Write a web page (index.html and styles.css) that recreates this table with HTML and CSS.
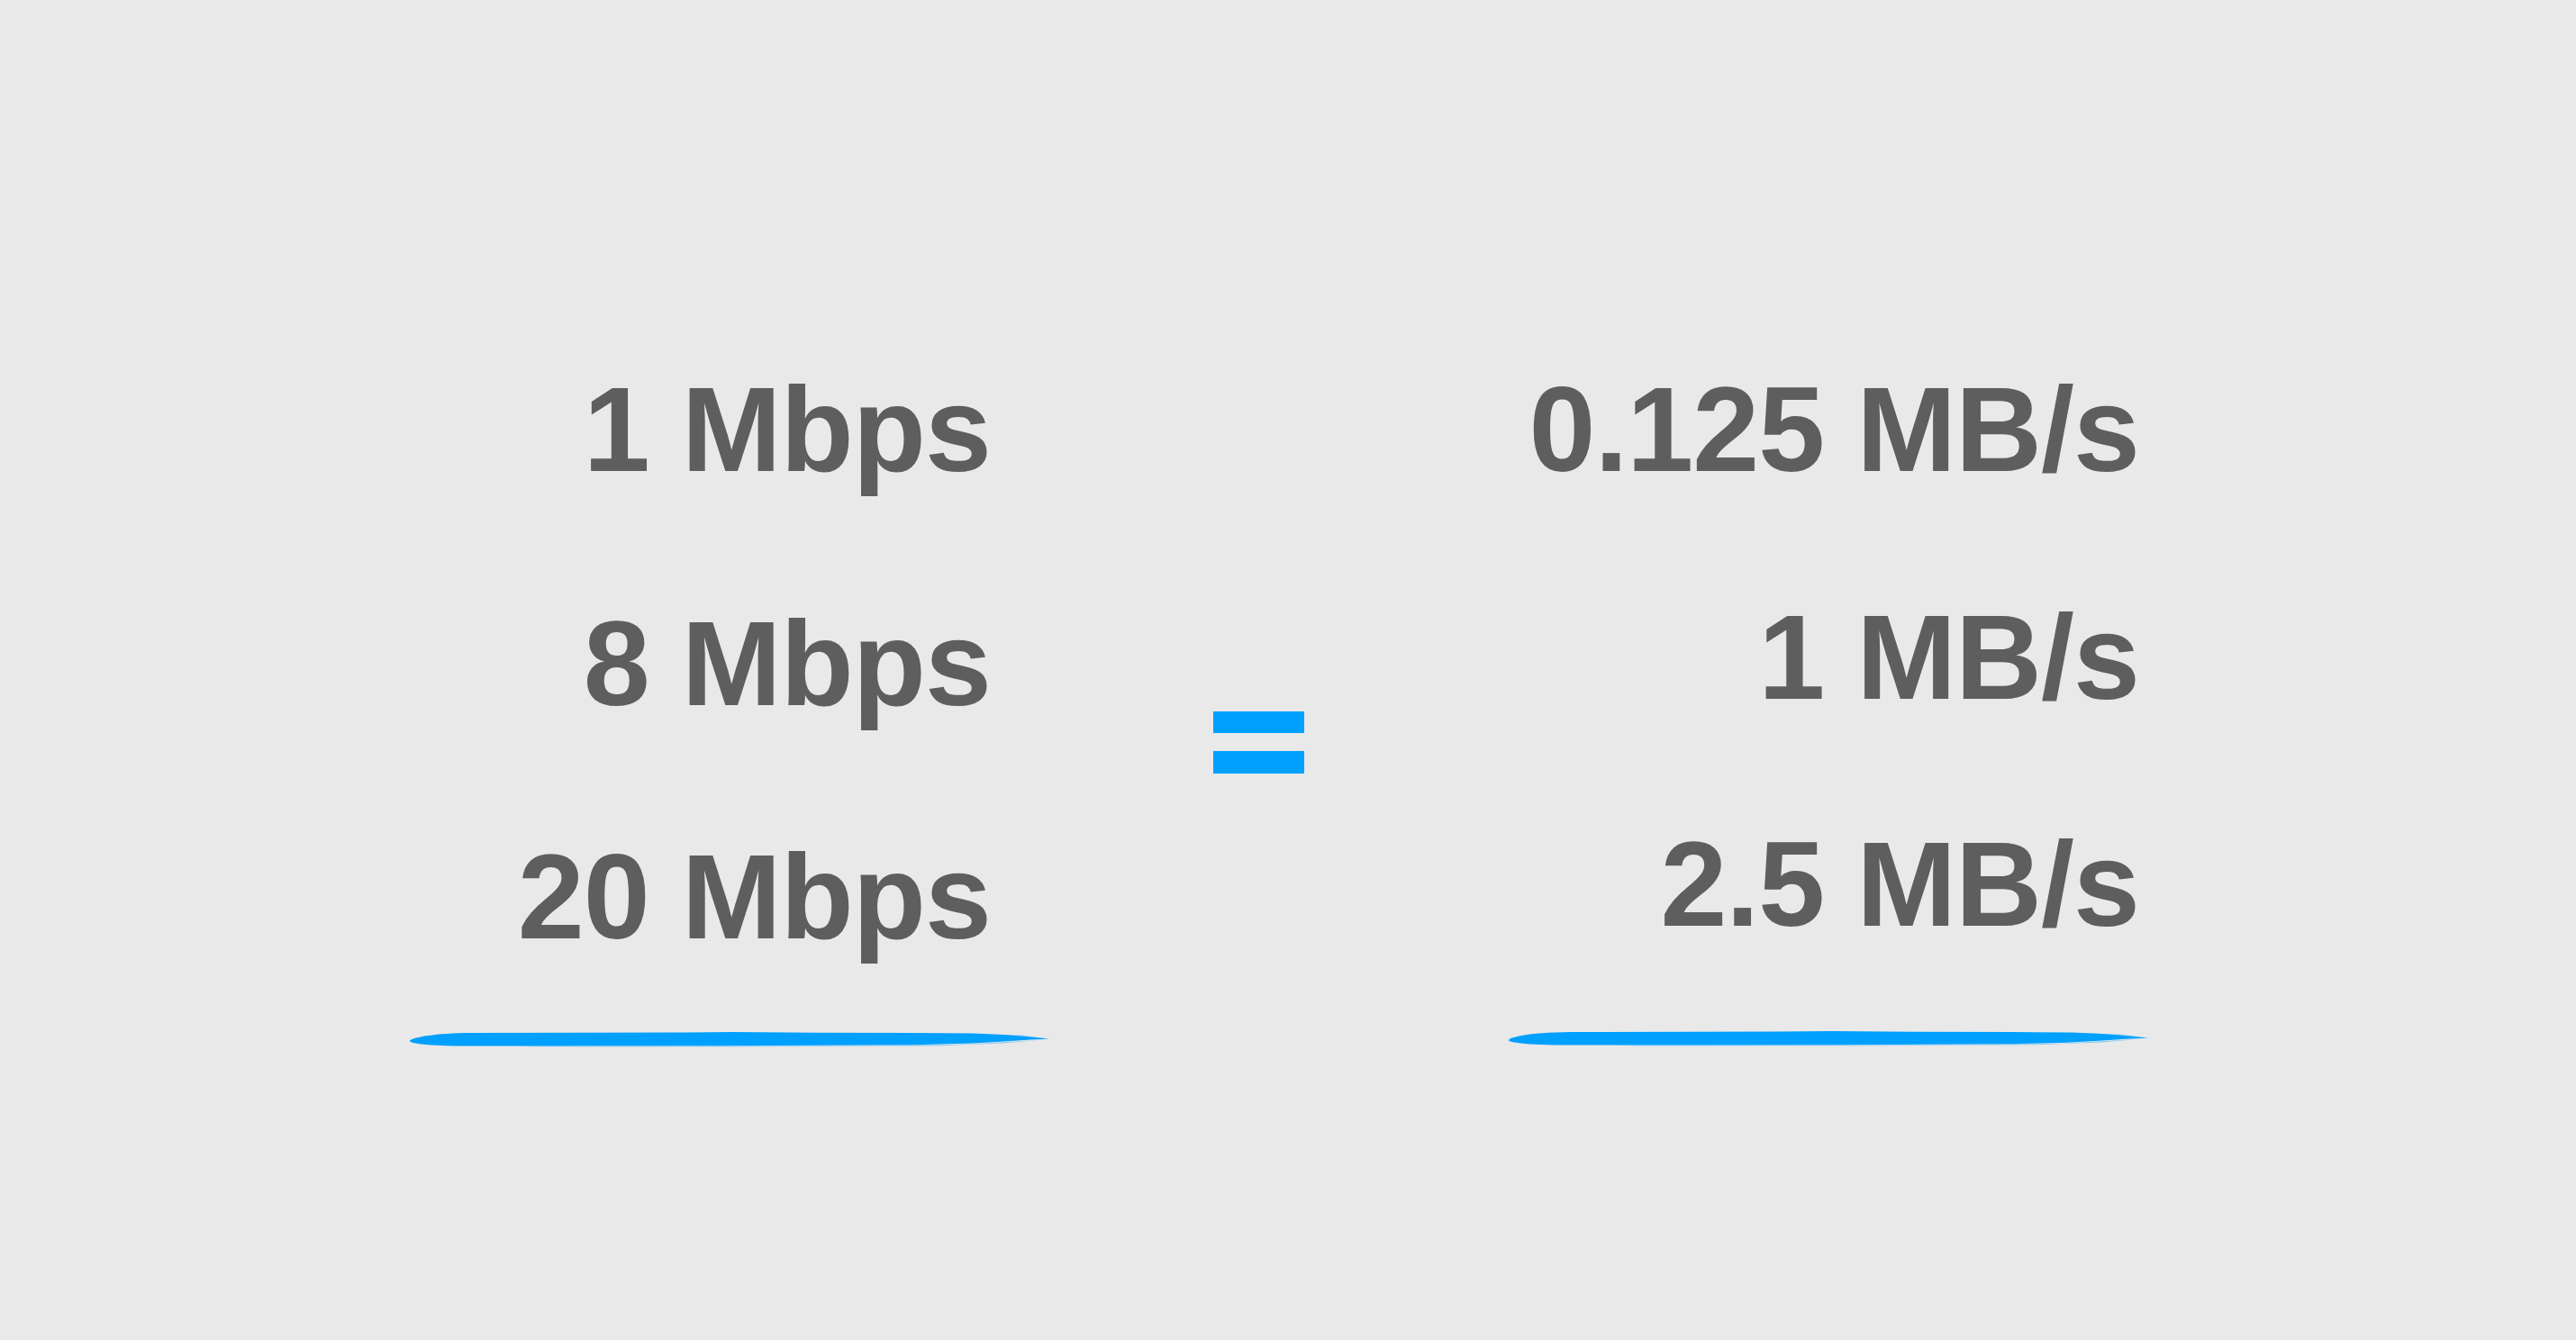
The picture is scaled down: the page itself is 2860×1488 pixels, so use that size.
FILE: index.html
```html
<!DOCTYPE html>
<html>
<head>
<meta charset="utf-8">
<link rel="stylesheet" href="styles.css">
</head>
<body>
<main class="stage">
  <section class="col col-left">
    <div class="line">1 Mbps</div>
    <div class="line">8 Mbps</div>
    <div class="line">20 Mbps</div>
    <svg class="brush brush-left" width="712" height="20" viewBox="0 0 712 20">
      <path class="stroke" d="M1 12 C1 9.5 20 3.4 70 3 L300 2.6 L360 2.1 L450 2.7 L560 3.1 L626 3.6 L660 5 L690 7.4 L711 9.7 L690 10.6 L660 12.6 L626 14.6 L560 16.2 L350 17.2 L150 17.4 L70 17.6 C20 17.6 1 14.5 1 12 Z"/>
      <path class="feather" d="M600 3.4 L680 5.6 L711 9.4 L690 8.6 L640 6.2 Z"/>
      <path class="feather" d="M520 17 L620 15.6 L690 11.4 L700 11 L660 14.4 L600 16.8 Z"/>
      <path class="fringe" d="M120 17.4 L560 16.4 L600 17.6 L360 18.4 L140 18.4 Z"/>
    </svg>
  </section>
  <section class="equals">
    <span class="bar"></span>
    <span class="bar"></span>
  </section>
  <section class="col col-right">
    <div class="line">0.125 MB/s</div>
    <div class="line">1 MB/s</div>
    <div class="line">2.5 MB/s</div>
    <svg class="brush brush-right" width="712" height="20" viewBox="0 0 712 20">
      <path class="stroke" d="M1 12 C1 9.5 20 3.4 70 3 L300 2.6 L360 2.1 L450 2.7 L560 3.1 L626 3.6 L660 5 L690 7.4 L711 9.7 L690 10.6 L660 12.6 L626 14.6 L560 16.2 L350 17.2 L150 17.4 L70 17.6 C20 17.6 1 14.5 1 12 Z"/>
      <path class="feather" d="M600 3.4 L680 5.6 L711 9.4 L690 8.6 L640 6.2 Z"/>
      <path class="feather" d="M520 17 L620 15.6 L690 11.4 L700 11 L660 14.4 L600 16.8 Z"/>
      <path class="fringe" d="M120 17.4 L560 16.4 L600 17.6 L360 18.4 L140 18.4 Z"/>
    </svg>
  </section>
</main>
</body>
</html>
```

FILE: styles.css
```css
html, body {
  margin: 0;
  padding: 0;
  background: #e9e9e9;
}

.stage {
  display: flex;
  align-items: flex-start;
  width: 2860px;
  height: 1488px;
  overflow: hidden;
}

.col {
  display: flex;
  flex-direction: column;
  font-family: "Liberation Sans", Arial, sans-serif;
  font-weight: 700;
  font-size: 133px;
  letter-spacing: -1px;
  color: #5e5e5e;
}

.line {
  text-align: right;
  white-space: nowrap;
}

.col-left {
  width: 1100px;
  padding-top: 348px;
}

.col-left .line {
  line-height: 259.5px;
}

.col-right {
  width: 927px;
  padding-top: 351px;
}

.col-right .line {
  line-height: 252.5px;
}

.equals {
  display: flex;
  flex-direction: column;
  gap: 20px;
  width: 101px;
  margin-left: 247px;
  margin-top: 790px;
}

.bar {
  display: block;
  height: 24px;
  background: #00a0ff;
}

.bar + .bar {
  height: 25px;
}

.brush {
  display: block;
}

.brush-left {
  margin-left: 454px;
  margin-top: 17px;
}

.brush-right {
  margin-left: 226px;
  margin-top: 34px;
}

.stroke {
  fill: #00a0ff;
}

.feather {
  fill: #00a0ff;
  opacity: 0.4;
}

.fringe {
  fill: #00a0ff;
  opacity: 0.25;
}
```
